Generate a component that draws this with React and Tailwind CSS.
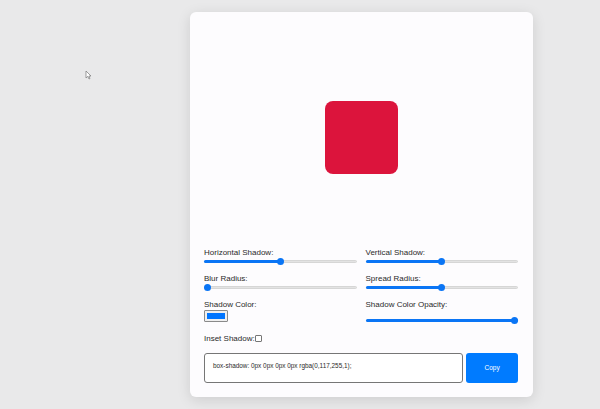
import React from "react";

function Slider({ pct }) {
  return (
    <div className="relative h-[8px] w-full">
      <div className="absolute left-0 right-0 top-[3px] h-[3px] rounded-full bg-[#e3e3e3] border border-[#d6d6d6]" />
      <div
        className="absolute left-0 top-[3px] h-[3px] rounded-full bg-[#0a75f5]"
        style={{ width: `${pct}%` }}
      />
      <div
        className="absolute top-[1px] h-[7px] w-[7px] -ml-[3.5px] rounded-full bg-[#0a75f5]"
        style={{ left: `calc(3.5px + (100% - 7px) * ${pct / 100})` }}
      />
    </div>
  );
}

function Label({ children }) {
  return <div className="text-[8px] leading-[9px] text-[#2a2a2a]">{children}</div>;
}

export default function App() {
  return (
    <div
      className="relative w-[600px] h-[409px] bg-[#e9e9ea] overflow-hidden"
      style={{ fontFamily: '"Liberation Sans", Arial, sans-serif' }}
    >
      <svg className="absolute left-[85px] top-[70px]" width="7" height="10" viewBox="0 0 7 10">
        <path d="M1 1 L1 8 L2.8 6.4 L4 9 L5 8.5 L3.9 6 L6 6 Z" fill="#fff" stroke="#777" strokeWidth="0.7" />
      </svg>
      <div className="absolute left-[190px] top-[12px] w-[343px] h-[385px] rounded-[6px] bg-[#fdfcfe] shadow-[0_3px_14px_rgba(0,0,0,0.12)] pl-[14px] pr-[15px] pt-[14px] flex flex-col">
        <div className="h-[222px] flex items-center justify-center">
          <div className="w-[73px] h-[73px] rounded-[8px] bg-[#dc143c]" />
        </div>
        <div className="grid grid-cols-2 gap-x-[9px] gap-y-[9px]">
          <div>
            <Label>Horizontal Shadow:</Label>
            <Slider pct={50} />
          </div>
          <div>
            <Label>Vertical Shadow:</Label>
            <Slider pct={50} />
          </div>
          <div>
            <Label>Blur Radius:</Label>
            <Slider pct={0} />
          </div>
          <div>
            <Label>Spread Radius:</Label>
            <Slider pct={50} />
          </div>
          <div>
            <Label>Shadow Color:</Label>
            <div className="mt-[1px] w-[24px] h-[12px] border border-[#8a8a8a] rounded-[1px] bg-[#efefef] p-[2px]">
              <div className="w-full h-full bg-[#0075ff]" />
            </div>
          </div>
          <div>
            <Label>Shadow Color Opacity:</Label>
            <div className="mt-[7px]">
              <Slider pct={100} />
            </div>
          </div>
        </div>
        <div className="mt-[10px] flex items-center text-[8px] leading-[9px] text-[#2a2a2a]">
          <span>Inset Shadow:</span>
          <span className="inline-block w-[7px] h-[7px] border border-[#767676] rounded-[1px] bg-white" />
        </div>
        <div className="mt-[10px] flex gap-[3px]">
          <div className="w-[260px] h-[30px] border border-[#767676] rounded-[3px] bg-white px-[8px] pt-[8px] text-[6.4px] leading-[8px] text-[#2a2a2a]">
            box-shadow: 0px 0px 0px 0px rgba(0,117,255,1);
          </div>
          <div className="w-[52px] h-[30px] rounded-[3px] bg-[#007bff] flex items-center justify-center text-[6.5px] text-white">
            Copy
          </div>
        </div>
      </div>
    </div>
  );
}
